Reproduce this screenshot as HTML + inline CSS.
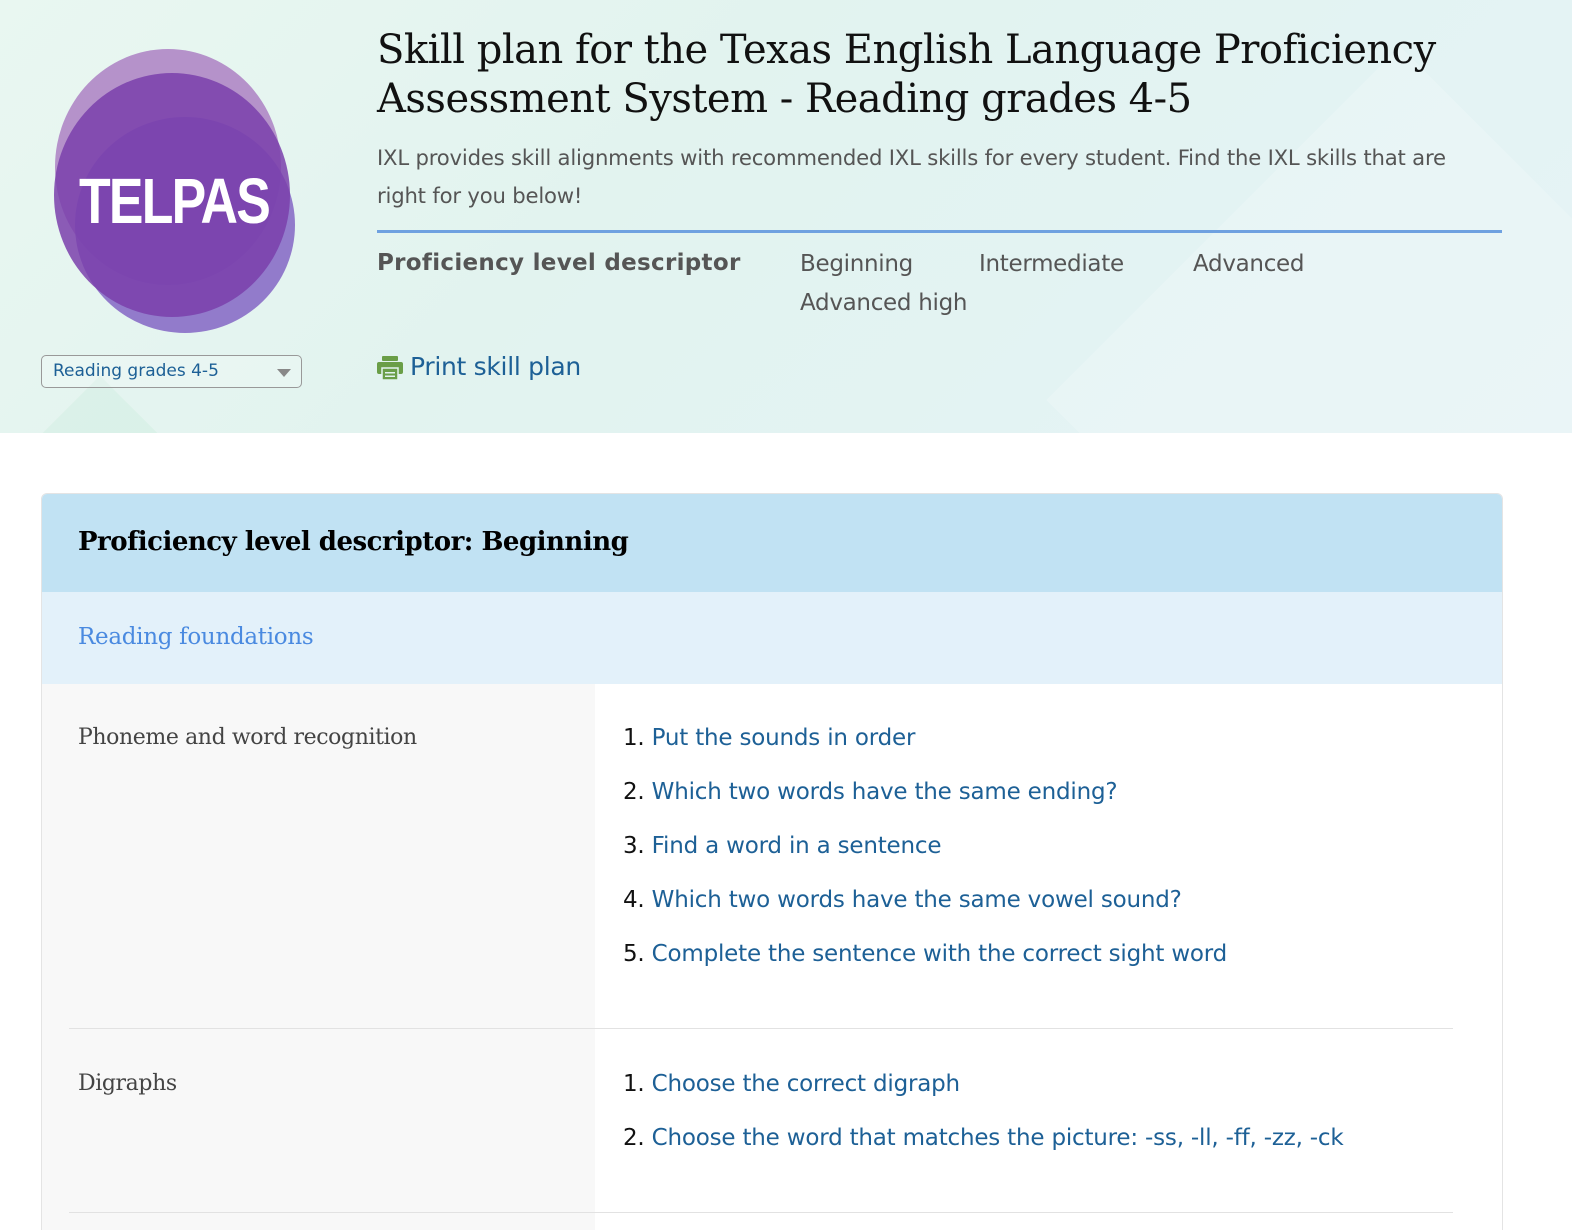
<!DOCTYPE html>
<html><head><meta charset="utf-8"><style>
*{margin:0;padding:0;box-sizing:border-box}
html,body{width:1572px;height:1230px;overflow:hidden}
body{background:#fff;font-family:"DejaVu Sans","Liberation Sans",sans-serif;position:relative}
.hdr{position:absolute;left:0;top:0;width:1572px;height:433px;background:linear-gradient(135deg,#e9f7f1 0%,#e2f3ef 40%,#e3f3f3 70%,#e6f3f6 100%);overflow:hidden}
.shape{position:absolute;background:rgba(200,235,222,.35);transform:rotate(45deg)}
.serif{font-family:"DejaVu Serif","Liberation Serif",serif}
h1{position:absolute;left:377px;top:26px;width:1180px;font-size:40px;line-height:49px;font-weight:normal;color:#111;letter-spacing:-0.5px}
.desc{position:absolute;left:377px;top:139px;width:1110px;font-size:21.2px;line-height:38px;color:#555;letter-spacing:-0.2px}
.rule{position:absolute;left:377px;top:230px;width:1125px;height:3px;background:#6fa1e0}
.pld{position:absolute;left:377px;top:250px;font-size:23px;font-weight:bold;color:#555;letter-spacing:0.3px}
.lv{position:absolute;font-size:23px;color:#555;letter-spacing:-0.3px}
.print{position:absolute;left:410px;top:352px;font-size:25px;color:#1d6096;letter-spacing:-0.3px}
.sel{position:absolute;left:41px;top:355px;width:261px;height:33px;border:1px solid #999;border-radius:5px;font-size:17px;color:#1d6096;padding:5px 11px;background:rgba(255,255,255,.2)}
.sel:after{content:"";position:absolute;right:10px;top:13px;border:7px solid transparent;border-top:8px solid #888;border-bottom:0}
.card{position:absolute;left:41px;top:493px;width:1462px;height:760px;border:1px solid #e4e4e4;border-radius:6px;overflow:hidden}
.ch{height:98px;background:#c1e2f3;padding:33px 36px;font-size:26px;font-weight:bold;color:#000;letter-spacing:-0.5px}
.cs{height:92px;background:#e3f1fa;padding:32px 36px;font-size:23px;color:#4a8ae0;letter-spacing:-0.3px}
.left{position:absolute;left:0;top:190px;width:553px;height:600px;background:#f8f8f8}
.sep{position:absolute;left:27px;width:1384px;height:1px;background:#e2e2e2}
.cat{position:absolute;left:36px;font-size:22px;color:#444;letter-spacing:-0.4px}
.it{position:absolute;left:581px;font-size:23px;color:#1d6096;letter-spacing:-0.2px;white-space:nowrap}
.it b{font-weight:normal;color:#111}
</style></head><body>
<div class="hdr">
<div class="shape" style="left:-200px;top:500px;width:600px;height:600px"></div>
<div class="shape" style="left:1150px;top:150px;width:500px;height:500px;background:rgba(255,255,255,.18)"></div>
<svg style="position:absolute;left:50px;top:45px" width="250" height="295" viewBox="0 0 250 295">
<ellipse cx="118" cy="122" rx="113" ry="118" fill="#a470be" opacity=".75"/>
<ellipse cx="135" cy="180" rx="110" ry="108" fill="#7d5cc2" opacity=".8"/>
<ellipse cx="122" cy="150" rx="118" ry="122" fill="#7a3fac" opacity=".85"/>
<text x="124" y="162" text-anchor="middle" font-family="Liberation Sans,sans-serif" font-weight="bold" font-size="58" fill="#fff" letter-spacing="-2" transform="scale(1,1.1)" textLength="190" lengthAdjust="spacingAndGlyphs">TELPAS</text>
</svg>
<div class="sel">Reading grades 4-5</div>
<h1 class="serif">Skill plan for the Texas English Language Proficiency Assessment System - Reading grades 4-5</h1>
<div class="desc">IXL provides skill alignments with recommended IXL skills for every student. Find the IXL skills that are right for you below!</div>
<div class="rule"></div>
<div class="pld">Proficiency level descriptor</div>
<div class="lv" style="left:800px;top:251px">Beginning</div>
<div class="lv" style="left:979px;top:251px">Intermediate</div>
<div class="lv" style="left:1193px;top:251px">Advanced</div>
<div class="lv" style="left:800px;top:290px">Advanced high</div>
<svg style="position:absolute;left:377px;top:356px" width="26" height="24" viewBox="0 0 26 24"><rect x="5" y="0" width="16" height="5" rx="1" fill="#6a9e47"/><rect x="0" y="6" width="26" height="12" rx="2" fill="#6a9e47"/><rect x="5" y="12" width="16" height="12" fill="#6a9e47" stroke="#e3f3ef" stroke-width="1.5"/><rect x="8" y="16" width="10" height="1.5" fill="#e3f3ef"/><rect x="8" y="19.5" width="10" height="1.5" fill="#e3f3ef"/></svg>
<div class="print">Print skill plan</div>
</div>
<div class="card">
<div class="ch serif">Proficiency level descriptor: Beginning</div>
<div class="cs serif">Reading foundations</div>
<div class="left"></div>
<div class="sep" style="top:534px"></div>
<div class="sep" style="top:718px"></div>
<div class="cat serif" style="top:231px">Phoneme and word recognition</div>
<div class="it" style="top:231px"><b>1.</b> Put the sounds in order</div>
<div class="it" style="top:285px"><b>2.</b> Which two words have the same ending?</div>
<div class="it" style="top:339px"><b>3.</b> Find a word in a sentence</div>
<div class="it" style="top:393px"><b>4.</b> Which two words have the same vowel sound?</div>
<div class="it" style="top:447px"><b>5.</b> Complete the sentence with the correct sight word</div>
<div class="cat serif" style="top:577px">Digraphs</div>
<div class="it" style="top:577px"><b>1.</b> Choose the correct digraph</div>
<div class="it" style="top:631px"><b>2.</b> Choose the word that matches the picture: -ss, -ll, -ff, -zz, -ck</div>
</div>
</body></html>
